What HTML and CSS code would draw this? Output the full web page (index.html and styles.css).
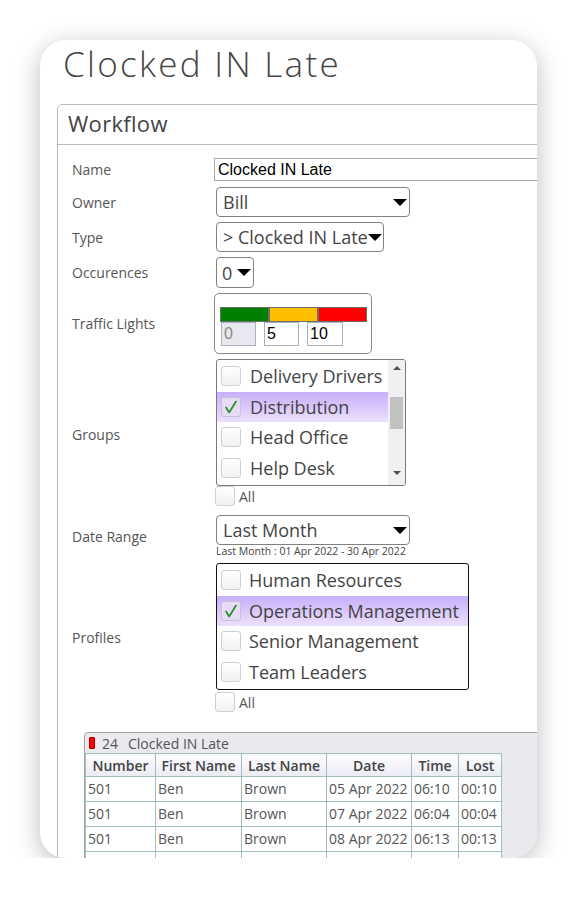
FILE: index.html
```html
<!DOCTYPE html>
<html lang="en">
<head>
<meta charset="utf-8">
<title>Clocked IN Late</title>
<link rel="stylesheet" href="styles.css">
</head>
<body>
<div class="card">
  <h1 class="title">Clocked IN Late</h1>
  <div class="panel">
    <div class="panel-head">Workflow</div>
    <div class="panel-body">
      <div class="row r-name">
        <div class="label">Name</div>
        <div class="textbox">Clocked IN Late</div>
      </div>
      <div class="row r-owner">
        <div class="label">Owner</div>
        <div class="select w-wide"><span>Bill</span><svg class="caret" viewBox="0 0 14 7"><path d="M0 0H14L7 7Z"/></svg></div>
      </div>
      <div class="row r-type">
        <div class="label">Type</div>
        <div class="select w-type"><span>&gt; Clocked IN Late</span><svg class="caret" viewBox="0 0 14 7"><path d="M0 0H14L7 7Z"/></svg></div>
      </div>
      <div class="row r-occ">
        <div class="label">Occurences</div>
        <div class="select w-occ"><span>0</span><svg class="caret" viewBox="0 0 14 7"><path d="M0 0H14L7 7Z"/></svg></div>
      </div>
      <div class="row r-traffic">
        <div class="label">Traffic Lights</div>
        <div class="traffic">
          <div class="bars">
            <div class="bar green"></div>
            <div class="bar amber"></div>
            <div class="bar red"></div>
          </div>
          <div class="tl-inputs">
            <div class="tl-in disabled">0</div>
            <div class="tl-in in2">5</div>
            <div class="tl-in in3">10</div>
          </div>
        </div>
      </div>
      <div class="row r-groups">
        <div class="label lbl-low">Groups</div>
        <div class="stack">
          <div class="listbox groups">
            <div class="items">
              <div class="item"><span class="cb"></span><span class="it">Delivery Drivers</span></div>
              <div class="item sel"><span class="cb on"><svg viewBox="0 0 20 20"><path d="M4.5 10.5L8 16L15.5 4"/></svg></span><span class="it">Distribution</span></div>
              <div class="item"><span class="cb"></span><span class="it">Head Office</span></div>
              <div class="item"><span class="cb"></span><span class="it">Help Desk</span></div>
            </div>
            <div class="scrollbar">
              <span class="arrow up"></span>
              <span class="thumb"></span>
              <span class="arrow down"></span>
            </div>
          </div>
          <div class="all"><span class="cb"></span><span>All</span></div>
        </div>
      </div>
      <div class="row r-date">
        <div class="label">Date Range</div>
        <div class="stack">
          <div class="select w-wide in-stack"><span>Last Month</span><svg class="caret" viewBox="0 0 14 7"><path d="M0 0H14L7 7Z"/></svg></div>
          <div class="range-note">Last Month : 01 Apr 2022 - 30 Apr 2022</div>
        </div>
      </div>
      <div class="row r-profiles">
        <div class="label">Profiles</div>
        <div class="stack">
          <div class="listbox profiles">
            <div class="items">
              <div class="item"><span class="cb"></span><span class="it">Human Resources</span></div>
              <div class="item sel"><span class="cb on"><svg viewBox="0 0 20 20"><path d="M4.5 10.5L8 16L15.5 4"/></svg></span><span class="it">Operations Management</span></div>
              <div class="item"><span class="cb"></span><span class="it">Senior Management</span></div>
              <div class="item"><span class="cb"></span><span class="it">Team Leaders</span></div>
            </div>
          </div>
          <div class="all"><span class="cb"></span><span>All</span></div>
        </div>
      </div>
      <div class="result">
        <div class="result-head"><span class="flag"></span><span class="count">24</span><span>Clocked IN Late</span></div>
        <table class="grid">
          <colgroup>
            <col class="c1"><col class="c2"><col class="c3"><col class="c4"><col class="c5"><col class="c6">
          </colgroup>
          <thead>
            <tr><th>Number</th><th>First Name</th><th>Last Name</th><th>Date</th><th>Time</th><th>Lost</th></tr>
          </thead>
          <tbody>
            <tr><td>501</td><td>Ben</td><td>Brown</td><td>05 Apr 2022</td><td>06:10</td><td>00:10</td></tr>
            <tr><td>501</td><td>Ben</td><td>Brown</td><td>07 Apr 2022</td><td>06:04</td><td>00:04</td></tr>
            <tr><td>501</td><td>Ben</td><td>Brown</td><td>08 Apr 2022</td><td>06:13</td><td>00:13</td></tr>
            <tr><td></td><td>Jordan</td><td></td><td></td><td></td><td></td></tr>
          </tbody>
        </table>
      </div>
    </div>
  </div>
</div>
</body>
</html>
```

FILE: styles.css
```css
* { box-sizing: border-box; }
html, body { margin: 0; padding: 0; background: #fff; }
body { font-family: "Open Sans", "Noto Sans", sans-serif; color: #555; }

.card {
  margin: 40px 0 0 40px;
  width: 497px;
  height: 818px;
  border-radius: 26px;
  background: #fff;
  box-shadow: 0 6px 26px rgba(0, 0, 0, 0.26);
  overflow: hidden;
}

.title {
  margin: 3px 0 0 23px;
  font-size: 35px;
  line-height: 42px;
  font-weight: 300;
  letter-spacing: 2.3px;
  color: #454545;
}

.panel {
  margin: 19px 0 0 17px;
  width: 560px;
  height: 900px;
  border: 1px solid #bdbdbd;
  border-radius: 5px 0 0 0;
}
.panel-head {
  height: 40px;
  border-bottom: 1px solid #bdbdbd;
  display: flex;
  align-items: center;
  padding: 0 0 3px 10px;
  font-size: 22px;
  letter-spacing: 0.3px;
  color: #444;
}
.panel-body { padding: 13px 0 0 14px; }

.row { display: flex; align-items: center; }
.label { width: 142px; flex: none; font-size: 14px; color: #555; }
.lbl-low { padding-top: 3px; }

.r-owner { margin-top: 6px; }
.r-type { margin-top: 5px; }
.r-occ { margin-top: 5px; }
.r-traffic { margin-top: 5px; }
.r-groups { margin-top: 5px; }
.r-date { margin-top: 9px; }
.r-profiles { margin-top: 6px; }

.textbox {
  width: 360px;
  height: 23px;
  border: 1px solid #a9a9a9;
  padding-left: 3px;
  font-family: "Liberation Sans", Arial, sans-serif;
  font-size: 16px;
  line-height: 21px;
  color: #000;
}

.select {
  margin-left: 2px;
  height: 30px;
  border: 1px solid #808080;
  border-radius: 4px;
  display: flex;
  align-items: center;
  justify-content: space-between;
  padding: 0 2px 0 6px;
  font-size: 18px;
  color: #444;
  white-space: nowrap;
}
.select.in-stack { margin-left: 0; }
.w-wide { width: 194px; }
.w-type { width: 168px; }
.w-occ { width: 38px; height: 31px; padding-left: 5px; }
.caret { width: 14px; height: 7px; flex: none; }
.caret path { fill: #000; }

.traffic {
  width: 158px;
  height: 61px;
  border: 1px solid #8a8a8a;
  border-radius: 5px;
  padding: 13px 0 0 5px;
}
.bars { display: flex; }
.bar { width: 49px; height: 15px; border: 1px solid #6e6e6e; }
.green { background: #008000; }
.amber { background: #ffbf00; }
.red { background: #ff0000; }
.tl-inputs { display: flex; margin-left: 1px; }
.tl-in {
  height: 24px;
  width: 35px;
  border: 1px solid #a6b3bf;
  padding-left: 2px;
  font-family: "Liberation Sans", Arial, sans-serif;
  font-size: 16px;
  line-height: 22px;
  color: #000;
  background: #fff;
}
.tl-in.disabled { background: #e8e8ee; color: #8a8a8a; }
.in2 { margin-left: 8px; }
.in3 { margin-left: 8px; width: 36px; }

.stack { display: flex; flex-direction: column; align-items: flex-start; margin-left: 2px; }

.listbox {
  height: 127px;
  border: 1px solid #7a7a7a;
  border-radius: 3px;
  display: flex;
  overflow: hidden;
}
.listbox.groups { width: 190px; }
.listbox.profiles { width: 253px; border-color: #111; }
.items { flex: 1; padding-top: 1px; }
.item {
  height: 30.5px;
  display: flex;
  align-items: center;
  padding-left: 4px;
  font-size: 18px;
  color: #444;
  white-space: nowrap;
}
.item.sel { background: linear-gradient(#c7affa, #ebe0fc); }
.it { margin-left: 9px; }
.profiles .it { margin-left: 8px; }

.cb {
  width: 20px;
  height: 20px;
  flex: none;
  border: 1px solid #cfcfcf;
  border-radius: 3px;
  background: linear-gradient(#ffffff, #f1f1f1);
  display: inline-flex;
}
.cb.on { background: #e6dcf6; border-color: #c9c0d6; }
.cb svg { width: 18px; height: 18px; }
.cb svg path { fill: none; stroke: #2f8f2f; stroke-width: 2; stroke-linecap: round; stroke-linejoin: round; }

.scrollbar {
  width: 17px;
  flex: none;
  background: #f0f0f0;
  display: flex;
  flex-direction: column;
  align-items: center;
  padding: 6px 0 0 0;
}
.arrow { width: 0; height: 0; border-left: 4px solid transparent; border-right: 4px solid transparent; }
.arrow.up { border-bottom: 4px solid #505050; }
.arrow.down { border-top: 4px solid #505050; margin-top: 42px; }
.thumb { width: 13px; height: 32px; background: #c1c1c1; margin-top: 27px; }

.all {
  margin-top: 0;
  display: flex;
  align-items: center;
  font-size: 14px;
  color: #555;
}
.all .cb { margin-left: -1px; margin-right: 4px; }
.r-profiles .all { margin-top: 2px; }

.range-note {
  font-size: 10.5px;
  line-height: 12px;
  color: #444;
  white-space: nowrap;
}

.result {
  margin: 20px 0 0 12px;
  width: 470px;
  height: 200px;
  background: #e9e9ee;
  border: 1px solid #a3a3a3;
  border-radius: 4px 0 0 0;
}
.result-head {
  height: 20px;
  display: flex;
  align-items: center;
  padding-left: 4px;
  font-size: 14px;
  color: #555;
}
.flag { width: 6px; height: 12px; background: #ff0000; border: 1px solid #a00; border-radius: 1px; margin-right: 7px; }
.count { margin-right: 10px; }

.grid {
  border-collapse: collapse;
  table-layout: fixed;
  width: 416px;
  background: #fff;
  font-size: 14px;
}
.c1 { width: 70px; }
.c2 { width: 86px; }
.c3 { width: 85px; }
.c4 { width: 85px; }
.c5 { width: 47px; }
.c6 { width: 43px; }
.grid th, .grid td {
  border: 1px solid #9dbfbf;
  white-space: nowrap;
  overflow: hidden;
}
.grid th {
  height: 23px;
  font-weight: 600;
  color: #444;
  text-align: center;
  background: linear-gradient(#fdfdff, #ebebf4);
  padding: 0;
}
.grid td {
  height: 25px;
  padding: 0 2px 2px 2px;
  color: #555;
  text-align: left;
  vertical-align: middle;
}
```
